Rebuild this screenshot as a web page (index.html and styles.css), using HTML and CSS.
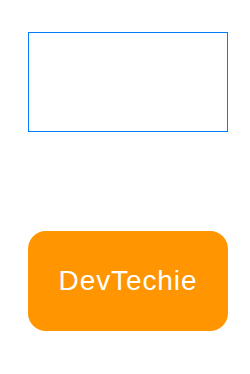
FILE: index.html
```html
<!DOCTYPE html>
<html>
<head>
<meta charset="utf-8">
<link rel="stylesheet" href="styles.css">
</head>
<body>
<div class="stack">
  <div class="outline"></div>
  <div class="pill">DevTechie</div>
</div>
</body>
</html>
```
FILE: styles.css
```css
html, body {
  margin: 0;
  padding: 0;
  background: #ffffff;
}
.stack {
  display: flex;
  flex-direction: column;
  gap: 99px;
  padding-top: 32px;
  padding-left: 28px;
}
.outline {
  width: 200px;
  height: 100px;
  box-sizing: border-box;
  border: 1px solid #007aff;
}
.pill {
  width: 200px;
  height: 100px;
  border-radius: 18px;
  background: #ff9500;
  color: #ffffff;
  font-family: "Liberation Sans", Arial, sans-serif;
  font-size: 28px;
  letter-spacing: 0.9px;
  display: flex;
  align-items: center;
  justify-content: center;
}
```
